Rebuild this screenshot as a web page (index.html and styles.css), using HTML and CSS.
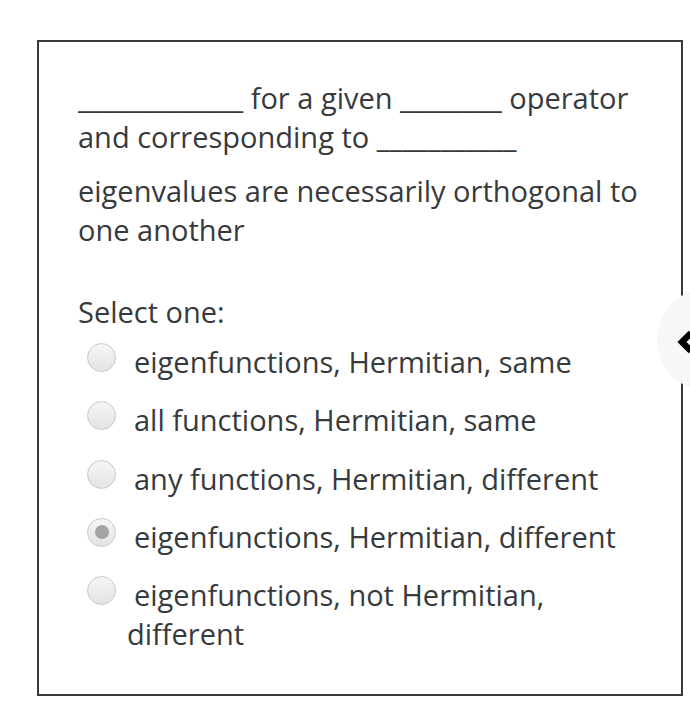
FILE: index.html
```html
<!DOCTYPE html>
<html lang="en">
<head>
<meta charset="utf-8">
<title>Question</title>
<link rel="stylesheet" href="styles.css">
</head>
<body>
<div class="page">
  <div class="qbox">
    <div class="qtext">
      <p class="para">_____________ for a given ________ operator and corresponding to ___________</p>
      <p class="para second">eigenvalues are necessarily orthogonal to one another</p>
    </div>
    <div class="prompt">Select one:</div>
    <div class="answers">
      <label class="opt"><input type="radio" name="q" class="radio"><span class="otext">eigenfunctions, Hermitian, same</span></label>
      <label class="opt"><input type="radio" name="q" class="radio"><span class="otext">all functions, Hermitian, same</span></label>
      <label class="opt"><input type="radio" name="q" class="radio"><span class="otext">any functions, Hermitian, different</span></label>
      <label class="opt"><input type="radio" name="q" class="radio" checked><span class="otext">eigenfunctions, Hermitian, different</span></label>
      <label class="opt"><input type="radio" name="q" class="radio"><span class="otext">eigenfunctions, not Hermitian, different</span></label>
    </div>
  </div>
  <div class="toggle">
    <svg class="chev" width="20" height="24" viewBox="0 0 20 24"><polyline points="14,3 5,12 14,21" fill="none" stroke="#000" stroke-width="6.5" stroke-linejoin="miter"/></svg>
  </div>
</div>
</body>
</html>
```
FILE: styles.css
```css
html, body {
  margin: 0;
  padding: 0;
  background: #fff;
}
body {
  font-family: "Open Sans", "Liberation Sans", sans-serif;
  color: #373a3c;
  overflow: hidden;
}
.page {
  position: relative;
  width: 690px;
  height: 706px;
  padding-top: 40px;
  box-sizing: border-box;
  overflow: hidden;
}
.qbox {
  margin-left: 37px;
  width: 646px;
  height: 656px;
  box-sizing: border-box;
  border: 2px solid #373a3c;
  padding: 36px 30px 0 39px;
  font-size: 29px;
  line-height: 39px;
}
.para {
  margin: 0;
}
.para.second {
  margin-top: 15px;
}
.prompt {
  margin-top: 43px;
}
.answers {
  margin-top: 11px;
  display: flex;
  flex-direction: column;
  gap: 19.3px;
}
.opt {
  display: flex;
  align-items: flex-start;
}
.radio {
  appearance: none;
  -webkit-appearance: none;
  margin: 1px 11px 0 9px;
  flex: 0 0 auto;
  width: 29px;
  height: 29px;
  border-radius: 50%;
  border: 1px solid #c9c9c9;
  background: linear-gradient(#f6f6f6, #e3e3e3);
  box-sizing: border-box;
  position: relative;
}
.radio:checked::after {
  content: "";
  position: absolute;
  left: 6.5px;
  top: 6.5px;
  width: 14px;
  height: 14px;
  border-radius: 50%;
  background: #a3a3a3;
}
.otext {
  text-indent: 7px;
  display: block;
}
.toggle {
  position: absolute;
  left: 657px;
  top: 288px;
  width: 103px;
  height: 103px;
  border-radius: 50%;
  background: #f7f7f7;
}
.chev {
  position: absolute;
  left: 20px;
  top: 42px;
}
```
